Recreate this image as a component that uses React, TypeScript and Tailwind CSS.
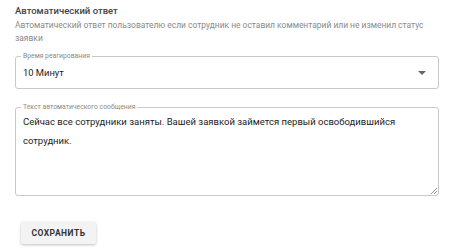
import React from 'react';

const App: React.FC = () => {
    return (
        <div className="w-[474px] h-[252px] bg-white font-['Roboto',sans-serif] pt-[4px] pl-[15px] pr-[35px]">
            <h2 className="text-[9.5px] leading-[14px] font-medium text-[#444]">Автоматический ответ</h2>
            <p className="text-[8.45px] leading-[13px] text-[#8a8a8a] mt-[1px] pr-[10px]">
                Автоматический ответ пользователю если сотрудник не оставил комментарий или не изменил статус заявки
            </p>

            <div className="relative mt-[11px] h-[33px] border border-[#c9c9c9] rounded-[3px] flex items-center pl-[7px] pr-[10px]">
                <span className="absolute -top-[5px] left-[5px] bg-white px-[2px] text-[6.8px] leading-[8px] text-[#8a8a8a]">
                    Время реагирования
                </span>
                <span className="flex-1 text-[9.4px] text-[#222] pt-[1px]">10 Минут</span>
                <svg width="8" height="4" viewBox="0 0 10 5" className="mr-[2px]">
                    <path d="M0 0 L10 0 L5 5 Z" fill="#666" />
                </svg>
            </div>

            <div className="relative mt-[18px] h-[89px] border border-[#c9c9c9] rounded-[3px] pl-[7px] pr-[10px] pt-[4px]">
                <span className="absolute -top-[5px] left-[5px] bg-white px-[2px] text-[6.8px] leading-[8px] text-[#8a8a8a]">
                    Текст автоматического сообщения
                </span>
                <p className="text-[9.5px] leading-[19px] text-[#222]">
                    Сейчас все сотрудники заняты. Вашей заявкой займется первый освободившийся сотрудник.
                </p>
                <svg width="6" height="6" viewBox="0 0 6 6" className="absolute right-[1px] bottom-[1px]">
                    <path d="M6 0 L0 6 M6 3 L3 6" stroke="#777" strokeWidth="0.8" />
                </svg>
            </div>

            <button className="mt-[26px] ml-[6px] w-[75px] h-[22px] bg-[#f3f3f3] rounded-[2px] shadow-[0_1px_3px_rgba(0,0,0,0.25)] text-[8.5px] font-bold tracking-[0.5px] text-[#333]">
                СОХРАНИТЬ
            </button>
        </div>
    );
};

export default App;
